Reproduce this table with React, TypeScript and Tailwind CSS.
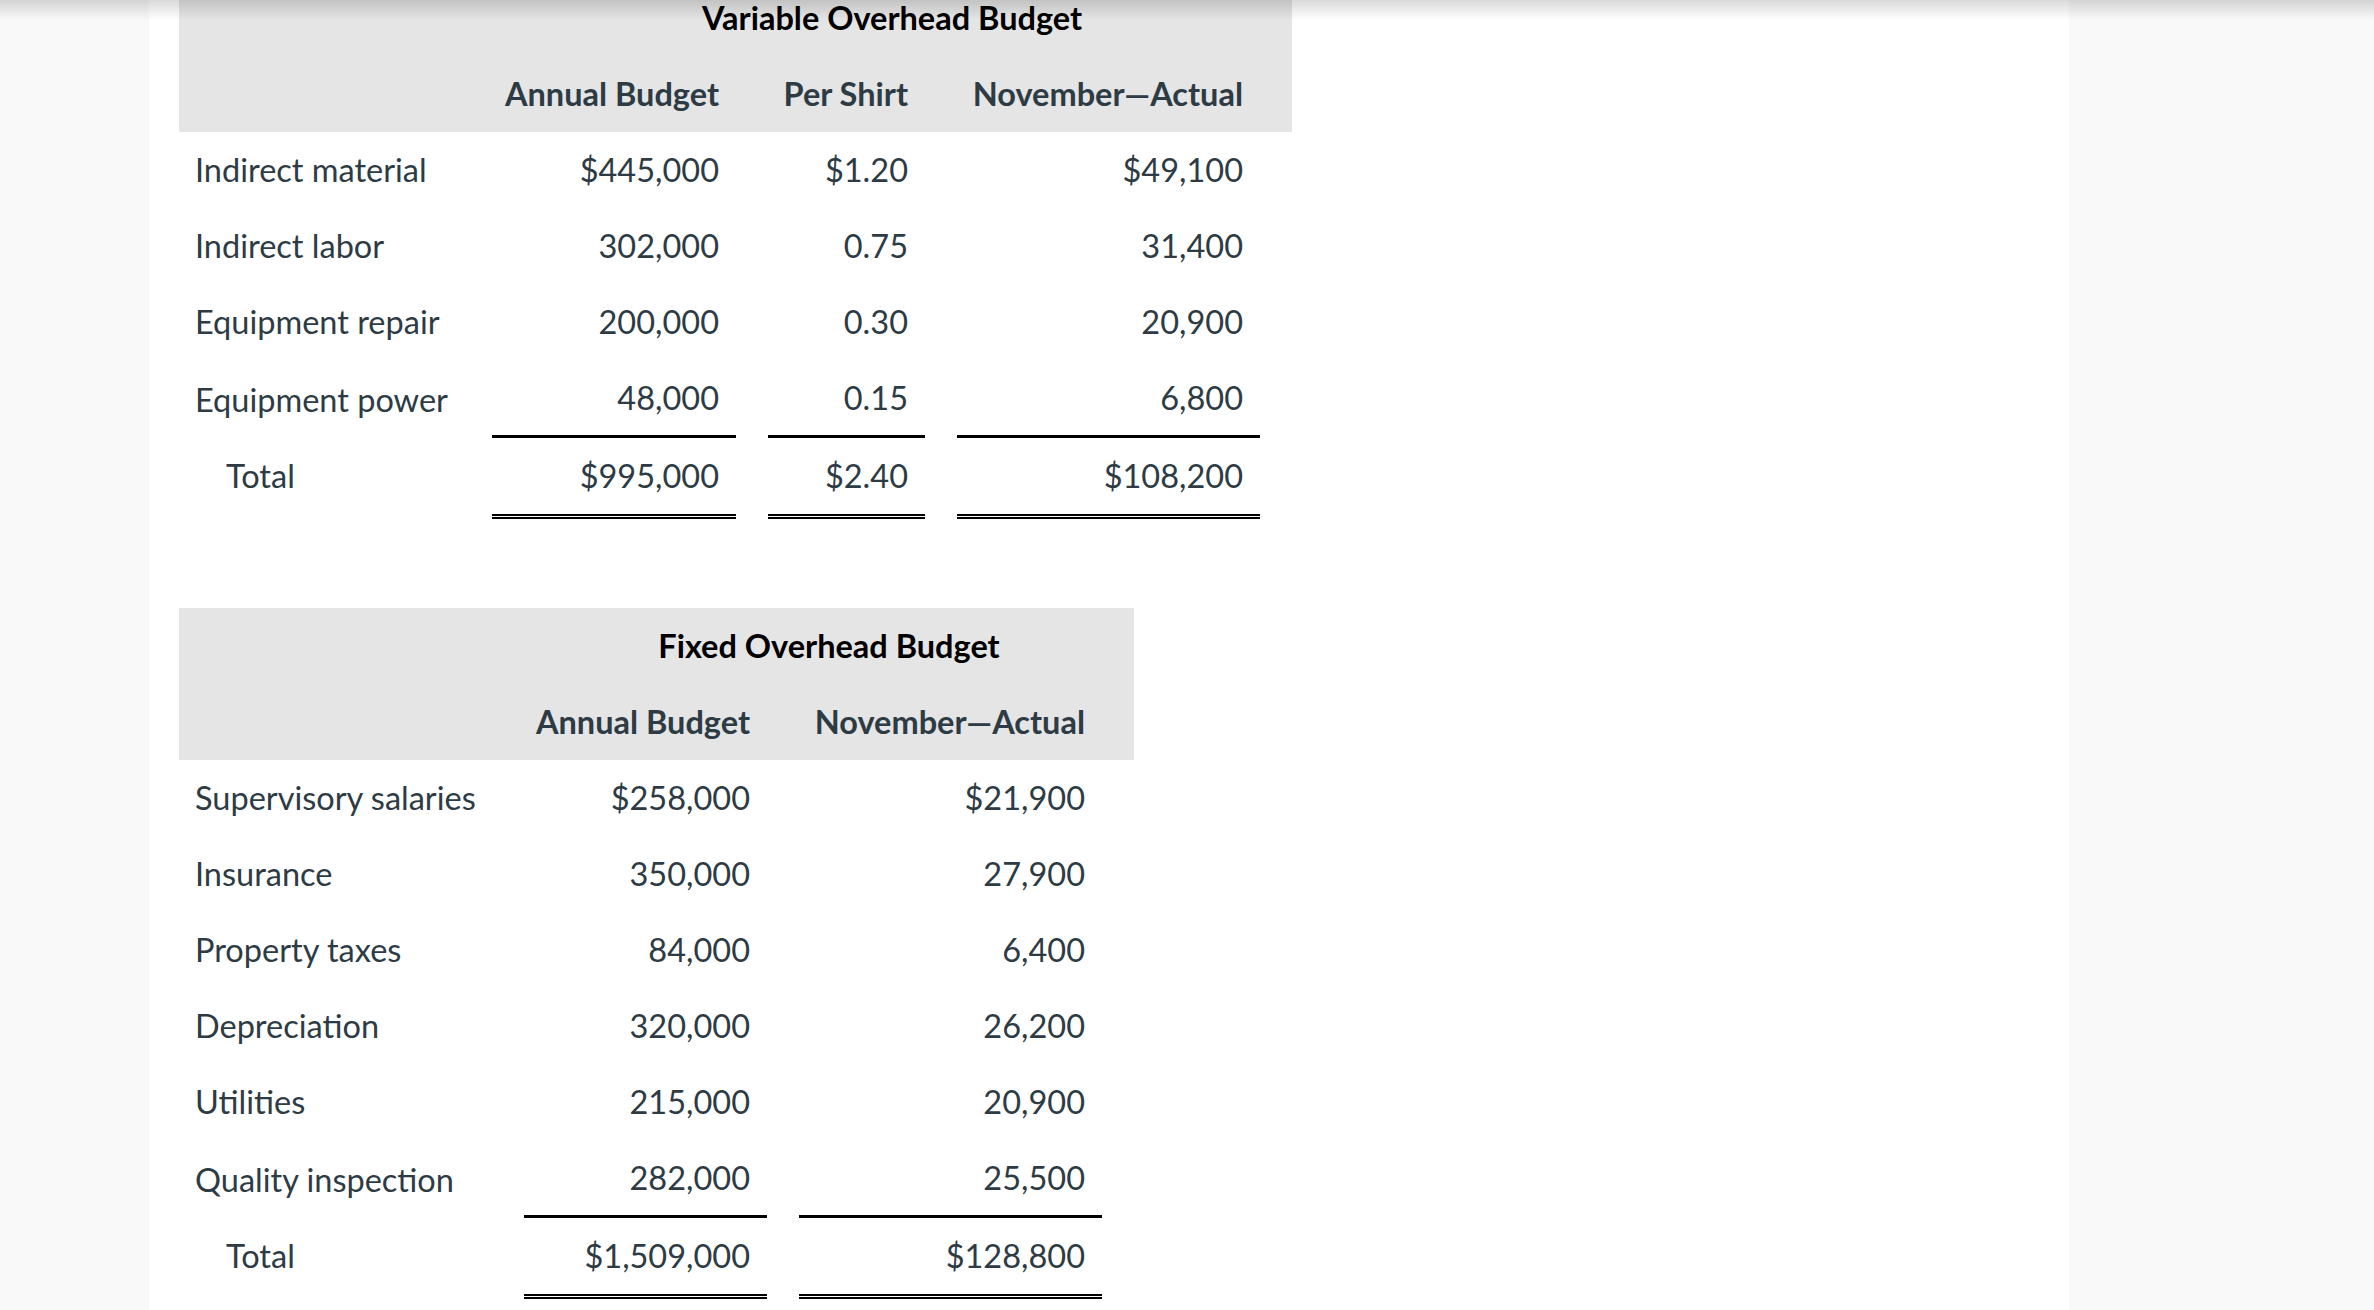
const variableRows = [
  { label: "Indirect material", annual: "$445,000", shirt: "$1.20", actual: "$49,100" },
  { label: "Indirect labor", annual: "302,000", shirt: "0.75", actual: "31,400" },
  { label: "Equipment repair", annual: "200,000", shirt: "0.30", actual: "20,900" },
  { label: "Equipment power", annual: "48,000", shirt: "0.15", actual: "6,800" },
];

const fixedRows = [
  { label: "Supervisory salaries", annual: "$258,000", actual: "$21,900" },
  { label: "Insurance", annual: "350,000", actual: "27,900" },
  { label: "Property taxes", annual: "84,000", actual: "6,400" },
  { label: "Depreciation", annual: "320,000", actual: "26,200" },
  { label: "Utilities", annual: "215,000", actual: "20,900" },
  { label: "Quality inspection", annual: "282,000", actual: "25,500" },
];

const label = "flex h-[76px] items-center pl-4";
const num = "flex h-[76px] items-center justify-end pr-[17px]";
const lastNum = "flex h-[78px] items-center justify-end pr-[17px] pt-[2px] border-b-[3px] border-black";
const totalNum = "flex h-[81px] items-center justify-end pr-[17px] border-b-[5px] border-double border-black";
const head = "flex h-[76px] items-center justify-end pr-[17px] font-bold";

function VariableTable() {
  const cols = "grid grid-cols-[281px_244px_157px_303px_0px] gap-x-8";
  return (
    <div className="w-fit">
      <div className={`${cols} bg-[#e5e5e5]`}>
        <div />
        <div className="col-span-4 flex h-[76px] items-center justify-center font-bold text-black">
          Variable Overhead Budget
        </div>
        <div />
        <div className={head}>Annual Budget</div>
        <div className={head}>Per Shirt</div>
        <div className={head}>November—Actual</div>
        <div />
      </div>
      <div className={cols}>
        {variableRows.map((r, i) => {
          const last = i === variableRows.length - 1;
          const c = last ? lastNum : num;
          return (
            <div key={r.label} className="contents">
              <div className={last ? "flex h-[78px] items-center pl-4 pt-[2px]" : label}>{r.label}</div>
              <div className={c}>{r.annual}</div>
              <div className={c}>{r.shirt}</div>
              <div className={c}>{r.actual}</div>
              <div />
            </div>
          );
        })}
        <div className="flex h-[81px] items-center pl-[47px] pb-[5px]">Total</div>
        <div className={totalNum}>$995,000</div>
        <div className={totalNum}>$2.40</div>
        <div className={totalNum}>$108,200</div>
        <div />
      </div>
    </div>
  );
}

function FixedTable() {
  const cols = "grid grid-cols-[313px_243px_303px_0px] gap-x-8";
  return (
    <div className="w-fit">
      <div className={`${cols} bg-[#e5e5e5]`}>
        <div />
        <div className="col-span-3 flex h-[76px] items-center justify-center font-bold text-black">
          Fixed Overhead Budget
        </div>
        <div />
        <div className={head}>Annual Budget</div>
        <div className={head}>November—Actual</div>
        <div />
      </div>
      <div className={cols}>
        {fixedRows.map((r, i) => {
          const last = i === fixedRows.length - 1;
          const c = last ? lastNum : num;
          return (
            <div key={r.label} className="contents">
              <div className={last ? "flex h-[78px] items-center pl-4 pt-[2px]" : label}>{r.label}</div>
              <div className={c}>{r.annual}</div>
              <div className={c}>{r.actual}</div>
              <div />
            </div>
          );
        })}
        <div className="flex h-[81px] items-center pl-[47px] pb-[5px]">Total</div>
        <div className={totalNum}>$1,509,000</div>
        <div className={totalNum}>$128,800</div>
        <div />
      </div>
    </div>
  );
}

export default function App() {
  return (
    <div
      className="relative flex h-[1310px] w-full overflow-hidden bg-white text-[32.5px] leading-normal text-[#2d3b45]"
      style={{ fontFamily: "Lato, 'Noto Sans', sans-serif" }}
    >
      <div className="w-[149px] shrink-0 bg-[#f9f9f9]" />
      <main className="w-[1920px] shrink-0 bg-white pl-[30px]">
        <div className="-mt-[20px]">
          <VariableTable />
          <div className="mt-[89px]">
            <FixedTable />
          </div>
        </div>
      </main>
      <div className="flex-1 bg-[#f9f9f9]" />
      {/* header shadow from the bar above */}
      <div className="pointer-events-none absolute inset-x-0 top-0 h-[20px] bg-gradient-to-b from-black/15 to-transparent" />
    </div>
  );
}
